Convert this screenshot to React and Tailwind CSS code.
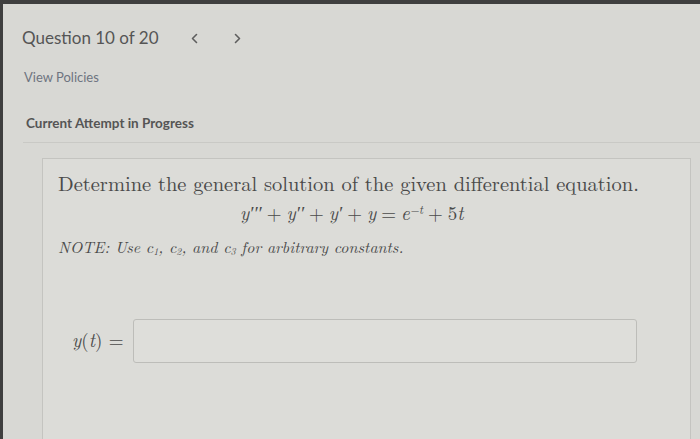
import React from 'react';

const serif = { fontFamily: '"Latin Modern Roman", "Liberation Serif", "DejaVu Serif", serif' };

function Chevron({ dir }) {
  return (
    <svg width="9" height="14" viewBox="0 0 9 14" fill="none" stroke="#5e5e5e" strokeWidth="1.6" strokeLinecap="round" strokeLinejoin="round">
      {dir === 'left' ? <path d="M6.5 3.5 L2.5 7.5 L6.5 11.5" /> : <path d="M2.5 3.5 L6.5 7.5 L2.5 11.5" />}
    </svg>
  );
}

function Op({ children }) {
  return <span className="not-italic mx-[5px]">{children}</span>;
}

export default function App() {
  return (
    <div className="w-[700px] h-[439px] overflow-hidden bg-[#3f3f3f] pt-[4px] pl-[3px]">
      <div className="h-full bg-[#d8d8d4] pl-[19px] pt-[22px]" style={{ fontFamily: 'Lato, "Open Sans", sans-serif' }}>
        <div className="flex items-center text-[#555555]">
          <span className="text-[17px] leading-[24px]">Question 10 of 20</span>
          <span className="ml-[31px]"><Chevron dir="left" /></span>
          <span className="ml-[34px]"><Chevron dir="right" /></span>
        </div>
        <div className="mt-[18px] ml-[2px] text-[13px] text-[#6e7480]">View Policies</div>
        <div className="mt-[25px] ml-[4px] text-[13.5px] leading-[20px] font-bold text-[#555555]">Current Attempt in Progress</div>
        <div className="mt-[9px] ml-[1px] h-px bg-[#c9c9c5]"></div>

        <div className="mt-[15px] ml-[20px] mr-[9px] h-[300px] border-l border-t border-r border-[#c4c4c0] bg-[#dcdcd8] pl-[15px] pt-[10px] text-[#4a4a4a]" style={serif}>
          <div className="text-[20.5px] leading-[28px]">Determine the general solution of the given differential equation.</div>
          <div className="text-[19px] leading-[26px] italic pl-[182px] mt-[3px]">
            y&#8242;&#8242;&#8242;<Op>+</Op>y&#8242;&#8242;<Op>+</Op>y&#8242;<Op>+</Op>y<Op>=</Op>e<sup className="text-[12px]">&minus;t</sup><Op>+</Op><span className="not-italic">5</span>t
          </div>
          <div className="mt-[9px] text-[16px] italic">
            NOTE: Use c<sub className="text-[10px]">1</sub>, c<sub className="text-[10px]">2</sub>, and c<sub className="text-[10px]">3</sub> for arbitrary constants.
          </div>
          <div className="mt-[60px] flex items-center">
            <div className="w-[75px] pl-[14px] text-[19px]"><i>y</i>(<i>t</i>) =</div>
            <div className="w-[504px] h-[44px] border border-[#bdbdb9] rounded-[3px] bg-[#dededa]"></div>
          </div>
        </div>
      </div>
    </div>
  );
}
